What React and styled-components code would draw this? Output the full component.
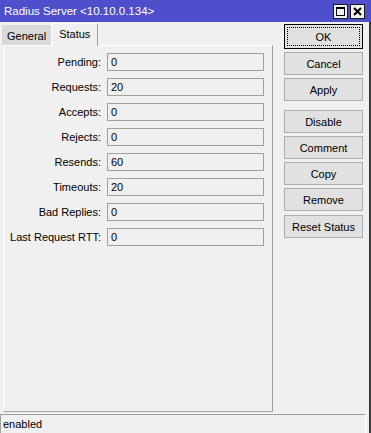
import React from "react";
import styled, { createGlobalStyle } from "styled-components";

const Global = createGlobalStyle`
  html, body { margin: 0; padding: 0; background: #f0f0f0; }
  body { font-family: "Liberation Sans", Arial, sans-serif; font-size: 11px; color: #000; }
  * { box-sizing: border-box; }
`;

const Window = styled.div`
  width: 371px;
  height: 433px;
  display: flex;
  flex-direction: column;
  background: #f0f0f0;
  overflow: hidden;
`;

const TitleBar = styled.div`
  height: 22px;
  flex: none;
  background: #4f4fcb;
  display: flex;
  align-items: center;
  padding: 0 6px 0 4px;
`;

const Title = styled.div`
  flex: 1;
  color: #fff;
  font-size: 11.5px;
  white-space: nowrap;
`;

const WinButtons = styled.div`
  display: flex;
  gap: 2px;
  margin-top: 1px;
`;

const WinButton = styled.div`
  width: 15px;
  height: 15px;
  background: #f0f0f0;
  border: 1px solid #1a1a1a;
  display: flex;
  align-items: center;
  justify-content: center;
`;

const MaxIcon = styled.div`
  width: 9px;
  height: 9px;
  border: 1px solid #000;
  border-top-width: 2px;
`;

const Body = styled.div`
  flex: 1;
  display: flex;
  border-right: 2px solid #3a3a3a;
  padding-right: 6px;
  min-height: 0;
`;

const LeftCol = styled.div`
  width: 273px;
  padding-left: 3px;
  display: flex;
  flex-direction: column;
`;

const TabRow = styled.div`
  height: 23px;
  display: flex;
  align-items: flex-end;
  margin-left: -1px;
`;

const Tab = styled.div`
  height: ${(p) => (p.$active ? "23px" : "20px")};
  margin-bottom: ${(p) => (p.$active ? "-1px" : "0")};
  padding: 0 ${(p) => (p.$active ? "7px" : "4px")};
  display: flex;
  align-items: center;
  padding-bottom: ${(p) => (p.$active ? "3px" : "0")};
  background: ${(p) => (p.$active ? "#f0f0f0" : "#d9d9d9")};
  border-top: 1px solid ${(p) => (p.$active ? "#ffffff" : "#d9d9d9")};
  border-left: 1px solid ${(p) => (p.$active ? "#ffffff" : "#d9d9d9")};
  border-right: 1px solid ${(p) => (p.$active ? "#a0a0a0" : "#d9d9d9")};
  position: relative;
  z-index: ${(p) => (p.$active ? 1 : 0)};
`;

const Panel = styled.div`
  width: 270px;
  height: 367px;
  border-top: 1px solid #ffffff;
  border-left: 1px solid #ffffff;
  border-right: 1px solid #a0a0a0;
  border-bottom: 1px solid #a0a0a0;
  padding-top: 7px;
`;

const FieldGrid = styled.div`
  display: grid;
  grid-template-columns: 97px 157px;
  column-gap: 6px;
  row-gap: 7px;
  align-items: center;
`;

const Label = styled.div`
  text-align: right;
  white-space: nowrap;
`;

const Value = styled.div`
  height: 18px;
  border: 1px solid #a0a0a0;
  background: #f0f0f0;
  padding-left: 3px;
  display: flex;
  align-items: center;
`;

const ButtonCol = styled.div`
  margin-left: 11px;
  width: 79px;
  padding-top: 2px;
  display: flex;
  flex-direction: column;
`;

const Button = styled.div`
  height: ${(p) => (p.$default ? "25px" : "23px")};
  margin-top: ${(p) => p.$gap}px;
  background: #e1e1e1;
  border: 1px solid ${(p) => (p.$default ? "#000" : "#adadad")};
  display: flex;
  align-items: center;
  justify-content: center;
  position: relative;
  white-space: nowrap;
  &::after {
    content: "";
    display: ${(p) => (p.$default ? "block" : "none")};
    position: absolute;
    inset: 2px;
    border: 1px dotted #000;
  }
`;

const StatusBar = styled.div`
  height: 20px;
  flex: none;
  display: flex;
  border-right: 2px solid #3a3a3a;
  padding-right: 3px;
  padding-top: 1px;
`;

const StatusCell = styled.div`
  flex: 1;
  border-top: 1px solid #a0a0a0;
  border-left: 1px solid #a0a0a0;
  border-right: 1px solid #ffffff;
  padding-left: 2px;
  display: flex;
  align-items: center;
`;

const fields = [
  ["Pending:", "0"],
  ["Requests:", "20"],
  ["Accepts:", "0"],
  ["Rejects:", "0"],
  ["Resends:", "60"],
  ["Timeouts:", "20"],
  ["Bad Replies:", "0"],
  ["Last Request RTT:", "0"],
];

const buttons = [
  ["OK", 0, true],
  ["Cancel", 3],
  ["Apply", 3],
  ["Disable", 9],
  ["Comment", 3],
  ["Copy", 3],
  ["Remove", 3],
  ["Reset Status", 4],
];

export default function App() {
  return (
    <>
      <Global />
      <Window>
        <TitleBar>
          <Title>Radius Server &lt;10.10.0.134&gt;</Title>
          <WinButtons>
            <WinButton>
              <MaxIcon />
            </WinButton>
            <WinButton>
              <svg width="9" height="9" viewBox="0 0 9 9">
                <path d="M1 1 L8 8 M8 1 L1 8" stroke="#000" strokeWidth="2" />
              </svg>
            </WinButton>
          </WinButtons>
        </TitleBar>
        <Body>
          <LeftCol>
            <TabRow>
              <Tab>General</Tab>
              <Tab $active>Status</Tab>
            </TabRow>
            <Panel>
              <FieldGrid>
                {fields.map(([l, v]) => (
                  <React.Fragment key={l}>
                    <Label>{l}</Label>
                    <Value>{v}</Value>
                  </React.Fragment>
                ))}
              </FieldGrid>
            </Panel>
          </LeftCol>
          <ButtonCol>
            {buttons.map(([t, g, d]) => (
              <Button key={t} $gap={g} $default={d}>
                {t}
              </Button>
            ))}
          </ButtonCol>
        </Body>
        <StatusBar>
          <StatusCell>enabled</StatusCell>
        </StatusBar>
      </Window>
    </>
  );
}
